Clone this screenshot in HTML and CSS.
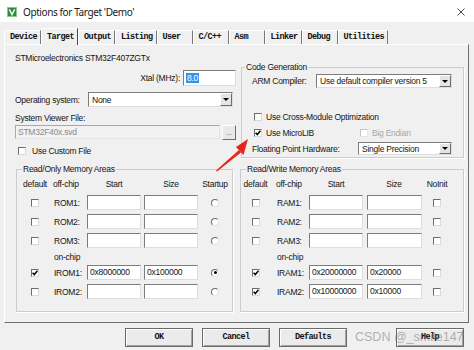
FILE: index.html
```html
<!DOCTYPE html>
<html lang="en">
<head>
    <meta charset="UTF-8">
    <title>Options for Target 'Demo'</title>
    <link rel="stylesheet" href="styles.css">
</head>
<body>
<div class="window">
    <div class="titlebar">
        <svg class="app-icon" viewBox="0 0 10 10">
            <rect x="0.5" y="0.5" width="9" height="9" fill="#2f8a3c" stroke="#86c98c"/>
            <path d="M2.3 2.3 L5 7.6 L7.7 2.3" fill="none" stroke="#fff" stroke-width="1.4"/>
        </svg>
        <span class="title">Options for Target 'Demo'</span>
        <svg class="close" viewBox="0 0 8 8">
            <path d="M0.5 0.5 L7.5 7.5 M7.5 0.5 L0.5 7.5" stroke="#333" stroke-width="0.9"/>
        </svg>
    </div>

    <div class="tabs">
        <div class="tab">Device</div>
        <div class="tab active">Target</div>
        <div class="tab">Output</div>
        <div class="tab">Listing</div>
        <div class="tab">User</div>
        <div class="tab">C/C++</div>
        <div class="tab">Asm</div>
        <div class="tab">Linker</div>
        <div class="tab">Debug</div>
        <div class="tab">Utilities</div>
    </div>

    <div class="panel">
        <div class="top-row">
            <div class="left-col">
                <div class="device">STMicroelectronics STM32F407ZGTx</div>
                <div class="xtal-row">
                    <span>Xtal (MHz):</span>
                    <div class="field xtal"><span class="selected">8.0</span></div>
                </div>
                <div class="os-row">
                    <span class="os-label">Operating system:</span>
                    <div class="combo os"><span>None</span><i class="drop"></i></div>
                </div>
                <div class="svf-label">System Viewer File:</div>
                <div class="file-row">
                    <div class="field disabled">STM32F40x.svd</div>
                    <div class="browse">...</div>
                </div>
                <div class="check-row custom"><span class="cb"></span>Use Custom File</div>
            </div>

            <fieldset class="group codegen">
                <legend>Code Generation</legend>
                <div class="codegen-body">
                    <div class="cg-row">
                        <span class="cg-label">ARM Compiler:</span>
                        <div class="combo compiler"><span>Use default compiler version 5</span><i class="drop"></i></div>
                    </div>
                    <div class="check-row cross"><span class="cb"></span>Use Cross-Module Optimization</div>
                    <div class="micro-row">
                        <div class="check-row micro">
                            <span class="cb"><svg viewBox="0 0 6 6"><path d="M0.6 2.8 L2.3 4.6 L5.5 0.8" fill="none" stroke="#000" stroke-width="1.5"/></svg></span>Use MicroLIB
                        </div>
                        <div class="check-row off"><span class="cb"></span>Big Endian</div>
                    </div>
                    <div class="cg-row fp-row">
                        <span class="fp-label">Floating Point Hardware:</span>
                        <div class="combo fp"><span>Single Precision</span><i class="drop"></i></div>
                    </div>
                </div>
            </fieldset>
        </div>

        <div class="bottom-row">
            <fieldset class="group mem rom">
                <legend>Read/Only Memory Areas</legend>
                <div class="mem-grid">
                    <span class="hd">default</span><span class="hd lbl">off-chip</span><span class="hd mid">Start</span><span class="hd mid">Size</span><span class="hd">Startup</span>

                    <span class="cb"></span><span class="lbl">ROM1:</span><span class="field"></span><span class="field"></span><span class="radio"></span>
                    <span class="cb"></span><span class="lbl">ROM2:</span><span class="field"></span><span class="field"></span><span class="radio"></span>
                    <span class="cb"></span><span class="lbl">ROM3:</span><span class="field"></span><span class="field"></span><span class="radio"></span>
                    <span></span><span class="lbl">on-chip</span><span></span><span></span><span></span>
                    <span class="cb"><svg viewBox="0 0 6 6"><path d="M0.6 2.8 L2.3 4.6 L5.5 0.8" fill="none" stroke="#000" stroke-width="1.5"/></svg></span><span class="lbl">IROM1:</span><span class="field">0x8000000</span><span class="field">0x100000</span><span class="radio on"></span>
                    <span class="cb"></span><span class="lbl">IROM2:</span><span class="field"></span><span class="field"></span><span class="radio"></span>
                </div>
            </fieldset>

            <fieldset class="group mem ram">
                <legend>Read/Write Memory Areas</legend>
                <div class="mem-grid">
                    <span class="hd">default</span><span class="hd lbl">off-chip</span><span class="hd mid">Start</span><span class="hd mid">Size</span><span class="hd">NoInit</span>

                    <span class="cb"></span><span class="lbl">RAM1:</span><span class="field"></span><span class="field"></span><span class="cb"></span>
                    <span class="cb"></span><span class="lbl">RAM2:</span><span class="field"></span><span class="field"></span><span class="cb"></span>
                    <span class="cb"></span><span class="lbl">RAM3:</span><span class="field"></span><span class="field"></span><span class="cb"></span>
                    <span></span><span class="lbl">on-chip</span><span></span><span></span><span></span>
                    <span class="cb"><svg viewBox="0 0 6 6"><path d="M0.6 2.8 L2.3 4.6 L5.5 0.8" fill="none" stroke="#000" stroke-width="1.5"/></svg></span><span class="lbl">IRAM1:</span><span class="field">0x20000000</span><span class="field">0x20000</span><span class="cb"></span>
                    <span class="cb"><svg viewBox="0 0 6 6"><path d="M0.6 2.8 L2.3 4.6 L5.5 0.8" fill="none" stroke="#000" stroke-width="1.5"/></svg></span><span class="lbl">IRAM2:</span><span class="field">0x10000000</span><span class="field">0x10000</span><span class="cb"></span>
                </div>
            </fieldset>
        </div>
    </div>

    <div class="buttons">
        <div class="btn">OK</div>
        <div class="btn">Cancel</div>
        <div class="btn">Defaults</div>
        <div class="btn help">Help</div>
    </div>

    <!-- annotation overlays -->
    <div class="watermark">CSDN @_smile147</div>
    <svg class="arrow" viewBox="0 0 40 40">
        <polygon points="1,31.5 24,11 26,13.5 2,32.5" fill="#e5261c"/>
        <polygon points="33,0 21,8 28.5,16" fill="#e5261c"/>
    </svg>
</div>
</body>
</html>
```

FILE: styles.css
```css
* {
    box-sizing: border-box;
}
body {
    margin: 0;
    background: #fff;
    font-family: "Liberation Sans", Arial, sans-serif;
    font-size: 8.5px;
    letter-spacing: -0.25px;
    color: #151515;
}
.window {
    position: relative;
    width: 474px;
    height: 350px;
    overflow: hidden;
    background: #f0f0f0;
}

/* title bar */
.titlebar {
    display: flex;
    align-items: center;
    height: 22px;
    padding: 2px 0 0 7px;
    background: #fff;
}
.app-icon {
    width: 10px;
    height: 10px;
}
.title {
    margin-left: 6px;
    font-family: "Noto Sans", sans-serif;
    font-size: 10px;
    letter-spacing: -0.4px;
    color: #1a1a1a;
}
.close {
    width: 8px;
    height: 8px;
    margin-left: auto;
    margin-right: 9px;
}

/* tabs */
.tabs {
    display: flex;
    align-items: flex-end;
    height: 22px;
    padding-left: 4px;
}
.tab {
    min-width: 36px;
    height: 14px;
    padding: 0 3px 0 5px;
    border-top: 1px solid #fff;
    border-left: 1px solid #fff;
    border-right: 1px solid #777;
    font-family: "Liberation Mono", monospace;
    font-weight: bold;
    font-size: 8.5px;
    letter-spacing: -0.6px;
    line-height: 13px;
    white-space: nowrap;
    color: #111;
}
.tab.active {
    position: relative;
    height: 17px;
    margin-bottom: -1px;
    padding-top: 2px;
    background: #f0f0f0;
    border-right-color: #444;
}

.panel {
    margin: 0 5px 0 4px;
    padding: 7px 4px 10px 10px;
    border: 1px solid #fff;
    border-right-color: #6d6d6d;
    border-bottom-color: #6d6d6d;
}

/* shared controls */
.field {
    display: block;
    background: #fff;
    border: 1px solid;
    border-color: #7c7c7c #dedede #dedede #7c7c7c;
    padding-left: 2px;
    line-height: 12px;
    white-space: nowrap;
    overflow: hidden;
}
.combo {
    display: flex;
    align-items: center;
    background: #fff;
    border: 1px solid;
    border-color: #7c7c7c #dedede #dedede #7c7c7c;
    padding-left: 3px;
    white-space: nowrap;
    overflow: hidden;
}
.drop {
    display: flex;
    flex: none;
    align-items: center;
    justify-content: center;
    width: 12px;
    height: 100%;
    margin-left: auto;
    background: #e4e4e4;
    border: 1px solid;
    border-color: #fff #6d6d6d #6d6d6d #fff;
}
.drop::after {
    content: "";
    border-left: 3px solid transparent;
    border-right: 3px solid transparent;
    border-top: 3px solid #000;
}
.cb {
    display: inline-flex;
    flex: none;
    align-items: center;
    justify-content: center;
    width: 8px;
    height: 8px;
    background: #fff;
    border: 1px solid;
    border-color: #6d6d6d #dadada #dadada #6d6d6d;
}
.cb svg {
    width: 6px;
    height: 6px;
}
.radio {
    display: inline-flex;
    align-items: center;
    justify-content: center;
    width: 8px;
    height: 8px;
    border-radius: 50%;
    background: #fff;
    border: 1px solid;
    border-color: #6d6d6d #e2e2e2 #e2e2e2 #6d6d6d;
}
.radio.on::after {
    content: "";
    width: 3px;
    height: 3px;
    border-radius: 50%;
    background: #000;
}
.check-row {
    display: flex;
    align-items: center;
    gap: 4px;
    height: 12px;
    white-space: nowrap;
}

/* top area */
.top-row {
    display: flex;
    gap: 5px;
}
.left-col {
    display: flex;
    flex-direction: column;
    width: 221px;
}
.device {
    height: 12px;
    line-height: 12px;
}
.xtal-row {
    display: flex;
    justify-content: flex-end;
    align-items: center;
    gap: 3px;
    margin-top: 6px;
}
.xtal {
    width: 53px;
    height: 16px;
    padding-top: 1px;
}
.selected {
    background: #3391f0;
    color: #fff;
    padding: 0 1px;
}
.os-row {
    display: flex;
    align-items: center;
    margin-top: 6px;
}
.os-label {
    width: 73px;
    white-space: nowrap;
}
.os {
    width: 145px;
    height: 15px;
}
.svf-label {
    margin-top: 5px;
    line-height: 12px;
}
.file-row {
    display: flex;
    gap: 2px;
    margin-top: 1px;
}
.field.disabled {
    width: 205px;
    height: 14px;
    background: #f2f2f2;
    border-color: #a8a8a8 #e6e6e6 #e6e6e6 #a8a8a8;
    color: #8a8a8a;
}
.browse {
    width: 14px;
    height: 15px;
    background: #e8e8e8;
    border: 1px solid;
    border-color: #fff #6d6d6d #6d6d6d #fff;
    font-size: 7px;
    line-height: 14px;
    text-align: center;
    color: #555;
}
.custom {
    margin-top: 5px;
    padding-left: 3px;
    gap: 6px;
}

/* group boxes */
.group {
    margin: 0;
    padding: 0;
    border: 1px solid #cdcdcd;
    box-shadow: 1px 1px 0 #fff;
    min-width: 0;
}
.group legend {
    margin-left: 3px;
    padding: 0 1px;
    line-height: 12px;
}
.codegen {
    width: 223px;
    margin-top: 9px;
}
.codegen-body {
    padding: 1px 10px 2px 10px;
}
.cg-row {
    display: flex;
    align-items: center;
    white-space: nowrap;
}
.cg-label {
    width: 64px;
}
.compiler {
    width: 136px;
    height: 14px;
}
.cross {
    margin-top: 23px;
    padding-left: 2px;
}
.micro-row {
    display: flex;
    margin-top: 4px;
}
.micro {
    width: 108px;
    padding-left: 2px;
}
.check-row.off {
    color: #a8a8a8;
}
.check-row.off .cb {
    border-color: #c4c4c4 #e8e8e8 #e8e8e8 #c4c4c4;
}
.fp-row {
    margin-top: 3px;
}
.fp-label {
    width: 106px;
}
.fp {
    width: 94px;
    height: 13px;
}

/* memory areas */
.bottom-row {
    display: flex;
    gap: 7px;
    margin-top: 5px;
}
.mem {
    padding: 1px 0 12px 0;
}
.mem legend {
    margin-left: 5px;
}
.rom {
    width: 217px;
    margin-left: 1px;
}
.ram {
    width: 224px;
}
.mem-grid {
    display: grid;
    grid-template-rows: 15px 15px 15px 15px 9px 15px 15px;
    row-gap: 4px;
    align-items: center;
    justify-items: center;
}
.rom .mem-grid {
    grid-template-columns: 36px 34px 57px 54px 34px;
}
.ram .mem-grid {
    grid-template-columns: 29px 39px 58px 55px 30px;
}
.mem-grid .field {
    justify-self: start;
    width: 54px;
    height: 15px;
}
.ram .mem-grid .field:nth-child(5n+4) {
    width: 55px;
}
.mem-grid .lbl {
    justify-self: start;
    padding-left: 1px;
    white-space: nowrap;
}
.ram .mem-grid .lbl {
    padding-left: 7px;
}
.mem-grid .hd.lbl {
    padding-left: 0;
}
.ram .mem-grid .hd.lbl {
    padding-left: 6px;
}
.mem-grid .mid {
    justify-self: start;
    width: 54px;
    text-align: center;
}

/* dialog buttons */
.buttons {
    display: flex;
    gap: 9px;
    margin-top: 5px;
    padding: 0 10px 0 125px;
}
.btn {
    width: 68px;
    height: 19px;
    background: #ebebeb;
    border: 1px solid #6a6a6a;
    box-shadow: inset 1px 1px 0 #fff, inset -1px -1px 0 #a3a3a3;
    font-family: "Liberation Mono", monospace;
    font-weight: bold;
    font-size: 8.5px;
    letter-spacing: -0.6px;
    line-height: 17px;
    text-align: center;
    color: #111;
}
.btn.help {
    margin-left: auto;
}

.watermark {
    position: absolute;
    left: 355px;
    top: 329px;
    font-family: "Liberation Sans", sans-serif;
    font-size: 12.5px;
    letter-spacing: 0;
    line-height: 16px;
    color: rgba(110, 110, 110, 0.5);
    white-space: nowrap;
}
.arrow {
    position: absolute;
    left: 215px;
    top: 139px;
    width: 40px;
    height: 40px;
}
```
